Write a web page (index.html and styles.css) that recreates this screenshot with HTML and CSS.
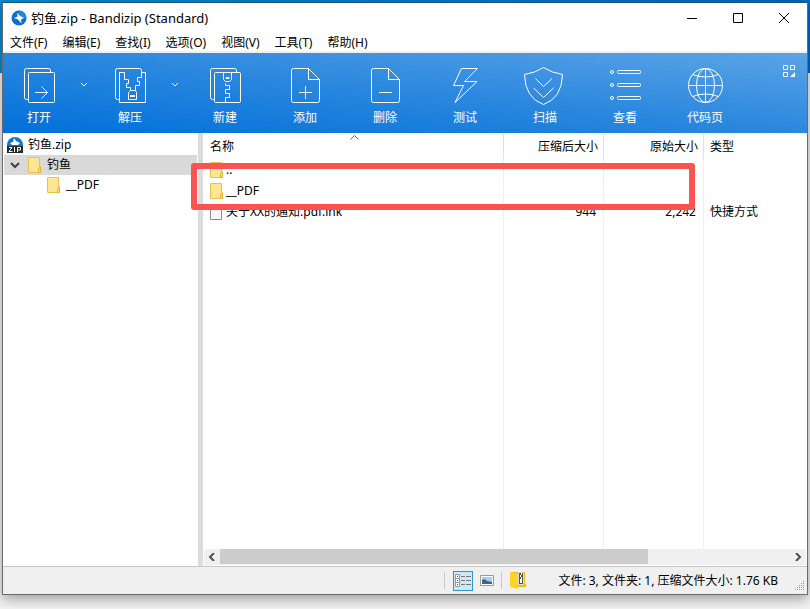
FILE: index.html
```html
<!DOCTYPE html>
<html lang="zh-CN">
<head>
    <meta charset="utf-8">
    <title>钓鱼.zip - Bandizip (Standard)</title>
    <link rel="stylesheet" href="styles.css">
</head>
<body>
    <svg class="defs" width="0" height="0">
        <symbol id="folder" viewBox="0 0 14 16">
            <path d="M.5 .5h11v9h1v6H.5z" fill="#ffe594" stroke="#e9c24b"/>
            <path d="M10.5 15.5v-4l2-1.500v5.500z" fill="#ffe083" stroke="#e3b62f"/>
        </symbol>
    </svg>
    <div class="window">
        <header class="titlebar">
            <svg class="logo" width="16" height="16" viewBox="0 0 16 16">
                <circle cx="8" cy="8" r="7.500" fill="#0b6fcb"/>
                <path d="M8 .5a7.500 7.500 0 0 1 7.500 7.500L8 8z" fill="#1c8ae0"/>
                <path d="M6 2.500l3 3.500 4 2-3 1.500.5 4-3.500-4L3 8l3.500-1.500z" fill="#fff"/>
            </svg>
            <h1>钓鱼.zip - Bandizip (Standard)</h1>
            <div class="controls">
                <button type="button" aria-label="最小化"><svg width="12" height="12" viewBox="0 0 12 12"><path d="M1 6.500h10"/></svg></button>
                <button type="button" aria-label="最大化"><svg width="12" height="12" viewBox="0 0 12 12"><path d="M1.500 1.500h9v9h-9z"/></svg></button>
                <button type="button" aria-label="关闭"><svg width="12" height="12" viewBox="0 0 12 12"><path d="M1 1l10 10M11 1L1 11"/></svg></button>
            </div>
        </header>

        <nav class="menu">
            <button type="button">文件(F)</button>
            <button type="button">编辑(E)</button>
            <button type="button">查找(I)</button>
            <button type="button">选项(O)</button>
            <button type="button">视图(V)</button>
            <button type="button">工具(T)</button>
            <button type="button">帮助(H)</button>
        </nav>

        <div class="toolbar">
            <div class="split">
                <button type="button" class="tool">
                    <svg width="40" height="40" viewBox="0 0 40 40"><path d="M9 33.500H7.500q-2 0-2-2v-27q0-2 2-2h22q2 0 2 2v2"/><rect x="9.500" y="6.500" width="26" height="30" rx="1"/><path d="M16 26.500h12.500M22.500 20.500l6 6-6 6"/></svg>
                    打开
                </button>
                <button type="button" class="more" aria-label="打开选项"><svg width="8" height="6" viewBox="0 0 8 6"><path d="M1 1l3 3 3-3"/></svg></button>
            </div>
            <div class="split">
                <button type="button" class="tool">
                    <svg width="40" height="40" viewBox="0 0 40 40"><path d="M9 33.500H7.500q-2 0-2-2v-27q0-2 2-2h22q2 0 2 2v2"/><path d="M20.500 24v-2.500h-4v-4h2v-4h-4v-7h-5v30h26v-30h-4v5h-4v4h2v4h-4V24"/><path d="M20.500 24.500h5l1 2v7h-8v-7z"/><rect x="20.500" y="29.500" width="4" height="1"/></svg>
                    解压
                </button>
                <button type="button" class="more" aria-label="解压选项"><svg width="8" height="6" viewBox="0 0 8 6"><path d="M1 1l3 3 3-3"/></svg></button>
            </div>
            <button type="button" class="tool">
                <svg width="40" height="40" viewBox="0 0 40 40"><path d="M9 33.500H7.500q-2 0-2-2v-27q0-2 2-2h22q2 0 2 2v2"/><rect x="9.500" y="6.500" width="26" height="30" rx="1"/><path d="M18.500 6.500v7l2 2h4l2-2v-7M21 11.500h3v1h-3zM20.500 17.500v2h4v4h-4v4h4v4h-4v5"/></svg>
                新建
            </button>
            <button type="button" class="tool">
                <svg width="40" height="40" viewBox="0 0 40 40"><path d="M23.500 2.500h-15q-2 0-2 2v30q0 2 2 2h24q2 0 2-2v-21zv11h11M14 26.500h13M20.500 20v13"/></svg>
                添加
            </button>
            <button type="button" class="tool">
                <svg width="40" height="40" viewBox="0 0 40 40"><path d="M23.500 2.500h-15q-2 0-2 2v30q0 2 2 2h24q2 0 2-2v-21zv11h11M14 26.500h13"/></svg>
                删除
            </button>
            <button type="button" class="tool">
                <svg width="40" height="40" viewBox="0 0 40 40"><path d="M16.500 2.500h16l-13 13H32l-22 21 8.500-17h-10z"/></svg>
                测试
            </button>
            <button type="button" class="tool">
                <svg width="40" height="40" viewBox="0 0 40 40"><path d="M18.500 1.500Q10 7-.5 8.500 0 32 18.500 38.500 37 32 37.500 8.500 27 7 18.500 1.500zM10.500 12.500l8 8 8.500-8M8.500 22l10 9.500 10-9.500"/></svg>
                扫描
            </button>
            <button type="button" class="tool">
                <svg width="40" height="40" viewBox="0 0 40 40"><circle cx="7" cy="6" r="1.500"/><circle cx="7" cy="19" r="1.500"/><circle cx="7" cy="32" r="1.500"/><rect x="12.500" y="4.500" width="23" height="3" rx="1"/><rect x="12.500" y="17.500" width="23" height="3" rx="1"/><rect x="12.500" y="30.500" width="23" height="3" rx="1"/></svg>
                查看
            </button>
            <button type="button" class="tool">
                <svg width="40" height="40" viewBox="0 0 40 40"><circle cx="20.500" cy="19.500" r="17"/><ellipse cx="20.500" cy="19.500" rx="9" ry="17"/><path d="M20.500 2.500v34M3.500 19.500h34M7.500 8.500q13 5 26 0M7.500 30.500q13-5 26 0"/></svg>
                代码页
            </button>
            <button type="button" class="layout" aria-label="布局">
                <svg width="12" height="12" viewBox="0 0 12 12"><path d="M.5 .5h4v4h-4zM7.500 .5h4v4h-4zM.5 7.500h4v4h-4z"/><path d="M12 7v5H7z" fill="#fff" stroke="none"/></svg>
            </button>
        </div>

        <main class="content">
            <ul class="tree">
                <li class="root">
                    <svg width="16" height="16" viewBox="0 0 16 16">
                        <path d="M0 8a8 8 0 0 1 16 0v1H0z" fill="#0e78d4"/>
                        <path d="M7 1l2 3 4 2-2 2H5L3 6l3-1z" fill="#fff"/>
                        <rect y="9" width="16" height="7" fill="#202830"/>
                        <path d="M2 10.500h3l-3 4h3.500M7.500 10v5M10.500 15v-4.500h3v2.500h-3" fill="none" stroke="#fff"/>
                    </svg>
                    钓鱼.zip
                </li>
                <li class="selected">
                    <svg class="arrow" width="10" height="8" viewBox="0 0 10 8"><path d="M1 2l4 4 4-4"/></svg>
                    <svg width="14" height="16"><use href="#folder"/></svg>
                    钓鱼
                </li>
                <li class="child">
                    <svg width="14" height="16"><use href="#folder"/></svg>
                    __PDF
                </li>
            </ul>

            <section class="list">
                <div class="table-wrap">
                    <table>
                        <thead>
                            <tr>
                                <th class="name">名称<svg class="sort" width="9" height="5" viewBox="0 0 9 5"><path d="M.5 4.500l4-4 4 4"/></svg></th>
                                <th class="size">压缩后大小</th>
                                <th class="size">原始大小</th>
                                <th>类型</th>
                            </tr>
                        </thead>
                        <tbody>
                            <tr>
                                <td><span class="file"><svg width="14" height="16"><use href="#folder"/></svg>..</span></td>
                                <td></td>
                                <td></td>
                                <td></td>
                            </tr>
                            <tr>
                                <td><span class="file"><svg width="14" height="16"><use href="#folder"/></svg>__PDF</span></td>
                                <td></td>
                                <td></td>
                                <td></td>
                            </tr>
                            <tr>
                                <td><span class="file"><svg width="14" height="16" viewBox="0 0 14 16"><path d="M.5 .5h9l2 2v13H.5z" fill="#f7f7f7" stroke="#8c8c8c"/></svg>关于XX的通知.pdf.lnk</span></td>
                                <td class="num">944</td>
                                <td class="num">2,242</td>
                                <td>快捷方式</td>
                            </tr>
                            <tr class="rest">
                                <td></td>
                                <td></td>
                                <td></td>
                                <td></td>
                            </tr>
                        </tbody>
                    </table>
                </div>
                <div class="scrollbar">
                    <button type="button" aria-label="向左滚动"><svg width="8" height="8" viewBox="0 0 8 8"><path d="M6 0L2 4l4 4"/></svg></button>
                    <div class="track"><div class="thumb"></div></div>
                    <button type="button" aria-label="向右滚动"><svg width="8" height="8" viewBox="0 0 8 8"><path d="M2 0l4 4-4 4"/></svg></button>
                </div>
                <div class="highlight"></div>
            </section>
        </main>

        <footer class="status">
            <div class="views">
                <button type="button" class="view active" aria-label="详细信息">
                    <svg width="16" height="14" viewBox="0 0 16 14">
                        <path d="M.5 .5h4v4h-4zM.5 4.500h4v4h-4zM.5 8.500h4v4h-4z" fill="#fff" stroke="#999"/>
                        <path d="M2 2.500h1" stroke="#555"/><path d="M2 6.500h1" stroke="#2d71c4"/><path d="M2 10.500h1" stroke="#d33"/>
                        <path d="M6 2.500h4M11 2.500h5M6 6.500h4M11 6.500h5M6 10.500h4M11 10.500h5" stroke="#777"/>
                    </svg>
                </button>
                <button type="button" class="view" aria-label="缩略图">
                    <svg width="14" height="12" viewBox="0 0 14 12">
                        <path d="M.5 .5h13v10H.5z" fill="#fff" stroke="#999"/>
                        <path d="M2 2h10v7H2z" fill="#a9cdf0"/>
                        <path d="M2 5q3-2 5 1l5 1v2H2z" fill="#35658c"/>
                    </svg>
                </button>
            </div>
            <svg class="archive" width="16" height="17" viewBox="0 0 16 17">
                <path d="M1 0h14v12h1v3H1z" fill="#f5bd12"/>
                <path d="M0 0l8 2v15l-8-2z" fill="#ffd42a"/>
                <path d="M8.500 .5h5v12h-5z" fill="#555" stroke="#ddd"/>
                <path d="M11 1h1v2h-1zM10 3h1v2h-1zM11 5h1v2h-1zM10 7h2v4h-2z" fill="#fff"/>
            </svg>
            <p>文件: 3, 文件夹: 1, 压缩文件大小: 1.76 KB</p>
            <svg class="grip" width="10" height="10" viewBox="0 0 10 10">
                <path d="M9.500 0v10M7.500 2v8M5.500 4v6M3.500 6v4M1.500 8v2" stroke="#999" stroke-dasharray="1 1"/>
            </svg>
        </footer>
    </div>
</body>
</html>
```

FILE: styles.css
```css
* {
    box-sizing: border-box;
}
body {
    margin: 0;
    height: 100vh;
    padding: 2px 2px 14px;
    overflow: hidden;
    background: linear-gradient(90deg, #058cd6, #0068c8) top / 100% 73px no-repeat, #f3f3f3;
    font-family: "Noto Sans", "Noto Sans CJK SC", sans-serif;
    font-size: 12px;
    line-height: 16px;
    color: #000;
}
button {
    border: none;
    padding: 0;
    background: none;
    font: inherit;
    color: inherit;
}
svg {
    display: block;
    flex: none;
    fill: none;
}
.defs {
    position: absolute;
}
.window {
    display: flex;
    flex-direction: column;
    height: 100%;
    border: 1px solid #6b6b6b;
    border-top-color: #17557f;
    background: #fff;
    box-shadow: 0 4px 12px rgba(0, 0, 0, 0.35);
}

/* title and menu */
.titlebar {
    display: flex;
    align-items: center;
    height: 29px;
    padding-left: 8px;
}
.titlebar h1 {
    flex: 1;
    margin: 0 0 0 4px;
    font-size: 13px;
    font-weight: normal;
}
.controls {
    display: flex;
}
.controls button {
    display: grid;
    place-items: center;
    width: 46px;
    height: 29px;
}
.controls svg {
    stroke: #000;
}
.menu {
    display: flex;
    gap: 15px;
    height: 21px;
    padding: 2px 0 0 7px;
    border-bottom: 2px solid #f0f0f0;
}

/* toolbar */
.toolbar {
    display: flex;
    height: 80px;
    background: linear-gradient(to top right, #0070da, #2a87de 50%, #5ba4e6);
    color: #fff;
}
.toolbar svg {
    stroke: #fff;
    overflow: visible;
}
.split {
    display: flex;
    width: 91px;
}
.tool {
    display: flex;
    flex-direction: column;
    align-items: center;
    gap: 4px;
    width: 80px;
    padding-top: 13px;
}
.split .tool {
    width: 72px;
}
.more {
    width: 19px;
    padding: 0 5px 16px;
}
.layout {
    align-self: flex-start;
    margin-left: auto;
    padding: 12px;
}

/* panes */
.content {
    display: flex;
    flex: 1;
    min-height: 0;
    border-bottom: 1px solid #c8c8c8;
}
.tree {
    width: 200px;
    margin: 0;
    padding: 2px 0 0 1px;
    border-right: 5px solid #dcdcdc;
    list-style: none;
}
.tree li {
    display: flex;
    align-items: center;
    gap: 5px;
    height: 20px;
}
.tree .root {
    padding-left: 3px;
}
.tree .selected {
    margin-right: 1px;
    padding-left: 6px;
    background: #d9d9d9;
}
.tree .child {
    padding-left: 43px;
}
.arrow {
    margin-right: 3px;
    stroke: #404040;
    stroke-width: 2;
}
.list {
    position: relative;
    display: flex;
    flex: 1;
    flex-direction: column;
    min-width: 0;
    padding: 1px;
}
.table-wrap {
    flex: 1;
    min-height: 0;
}
table {
    width: 100%;
    height: 100%;
    border-spacing: 0;
    table-layout: fixed;
}
th, td {
    height: 21px;
    padding: 0 6px;
    border-right: 1px solid #e8f0fa;
    text-align: left;
    font-weight: normal;
}
th:last-child, td:last-child {
    border-right: none;
}
th {
    position: relative;
    height: 25px;
    border-right-color: #e0e0e0;
}
.name {
    width: 300px;
}
.size {
    width: 100px;
    padding-right: 5px;
    text-align: right;
}
.num {
    padding-right: 7px;
    text-align: right;
}
.rest td {
    height: auto;
}
.sort {
    position: absolute;
    top: 1px;
    left: 50%;
    margin-left: -4px;
    stroke: #666;
}
.file {
    display: flex;
    align-items: center;
    gap: 2px;
}
.scrollbar {
    display: flex;
    height: 16px;
    background: #f0f0f0;
}
.scrollbar button {
    display: grid;
    place-items: center;
    width: 16px;
}
.scrollbar svg {
    stroke: #505050;
    stroke-width: 2;
}
.track {
    flex: 1;
}
.thumb {
    width: 75%;
    height: 15px;
    background: #cdcdcd;
}

/* marked rows */
.highlight {
    position: absolute;
    top: 30px;
    left: -12px;
    right: 112px;
    height: 47px;
    border: 6px solid #fb5252;
    border-radius: 3px;
}

/* status bar */
.status {
    display: flex;
    align-items: center;
    justify-content: flex-end;
    height: 27px;
    background: #f0f0f0;
}
.views {
    display: flex;
    align-items: center;
    gap: 4px;
    height: 17px;
    padding: 0 4px 0 8px;
    border: solid #c8c8c8;
    border-width: 0 1px;
}
.view {
    display: grid;
    place-items: center;
    width: 20px;
    height: 20px;
}
.view.active {
    border: 1px solid #2a9ad6;
    background: #cbe8f6;
}
.archive {
    margin: 0 32px 0 8px;
}
.status p {
    margin: 0 16px 0 0;
}
.grip {
    align-self: flex-end;
    margin: 0 3px 3px 0;
}
```
